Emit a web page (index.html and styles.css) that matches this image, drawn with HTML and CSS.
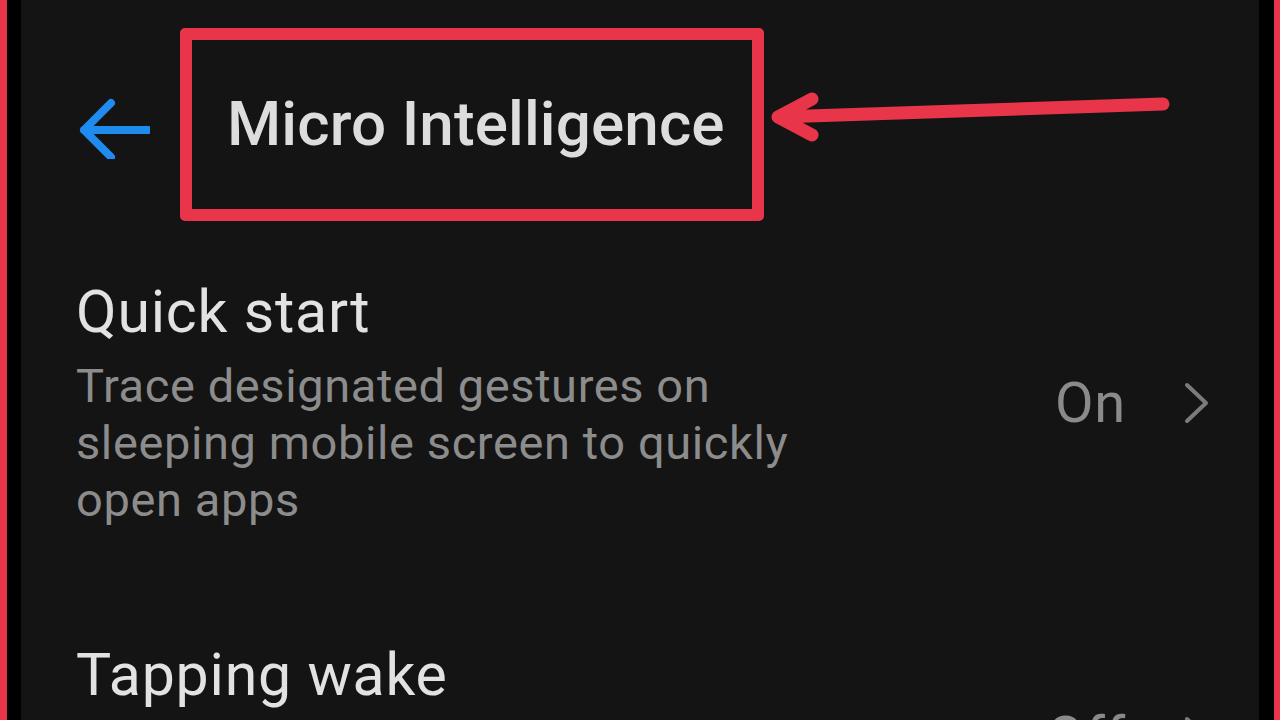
FILE: index.html
```html
<!DOCTYPE html>
<html lang="en">
<head>
<meta charset="utf-8">
<title>Micro Intelligence</title>
<link rel="stylesheet" href="styles.css">
</head>
<body>
<div class="frame">
  <div class="edge edge-left"></div>
  <main class="screen">
    <header class="appbar">
      <button class="back" aria-label="Back">
        <svg width="72" height="72" viewBox="0 0 72 72">
          <path d="M33 16 L6 43 L33 70 M6 43 L70 43" fill="none" stroke="#1f8bef" stroke-width="8" stroke-linecap="round" stroke-linejoin="round"/>
        </svg>
      </button>
      <div class="title-box">
        <h1 class="title">Micro Intelligence</h1>
      </div>
    </header>

    <section class="list">
      <div class="row">
        <div class="row-text">
          <div class="row-title">Quick start</div>
          <div class="row-sub">Trace designated gestures on sleeping mobile screen to quickly open apps</div>
        </div>
        <div class="row-value">
          <span class="value">On</span>
          <svg class="chev" width="26" height="42" viewBox="0 0 26 42">
            <path d="M3 3 L22 21 L3 39" fill="none" stroke="#7b7b7b" stroke-width="4" stroke-linecap="round" stroke-linejoin="round"/>
          </svg>
        </div>
      </div>
      <div class="row">
        <div class="row-text">
          <div class="row-title">Tapping wake</div>
          <div class="row-sub">Double-tap the screen to wake it up or turn it off</div>
        </div>
        <div class="row-value">
          <span class="value">Off</span>
          <svg class="chev" width="26" height="42" viewBox="0 0 26 42">
            <path d="M3 3 L22 21 L3 39" fill="none" stroke="#7b7b7b" stroke-width="4" stroke-linecap="round" stroke-linejoin="round"/>
          </svg>
        </div>
      </div>
    </section>
  </main>
  <div class="edge edge-right"></div>

  <svg class="pointer" width="1280" height="720" viewBox="0 0 1280 720" aria-hidden="true">
    <path d="M1163 104 L779 117 M812 99 L778 117 L812 135" fill="none" stroke="#e9354a" stroke-width="13" stroke-linecap="round" stroke-linejoin="round"/>
  </svg>
</div>
</body>
</html>
```

FILE: styles.css
```css
* {
  box-sizing: border-box;
}

html, body {
  margin: 0;
  padding: 0;
  height: 100%;
  overflow: hidden;
  background: #000;
}

body {
  font-family: Roboto, "Noto Sans", "Liberation Sans", sans-serif;
}

.frame {
  position: relative;
  display: flex;
  width: 1280px;
  height: 720px;
  overflow: hidden;
}

.edge {
  flex: none;
  background: #000;
}

.edge-left {
  width: 21px;
  border-left: 7px solid #e9354a;
}

.edge-right {
  width: 21px;
  border-right: 6px solid #e9354a;
}

.screen {
  flex: 1;
  background: #141414;
  display: flex;
  flex-direction: column;
}

.appbar {
  display: flex;
  align-items: center;
  padding-top: 28px;
  padding-left: 57px;
  height: 221px;
}

.back {
  flex: none;
  width: 72px;
  height: 72px;
  padding: 0;
  border: 0;
  background: none;
  margin-right: 30px;
  margin-top: -3px;
  display: block;
}

.back svg {
  display: block;
}

.title-box {
  width: 584px;
  height: 193px;
  border: 12px solid #e9354a;
  border-radius: 5px;
  padding: 47px 0 0 35px;
}

.title {
  margin: 0;
  font-size: 62px;
  line-height: 73px;
  font-weight: 500;
  color: #dddddd;
  letter-spacing: 0.1px;
}

.list {
  display: flex;
  flex-direction: column;
}

.row {
  display: flex;
  align-items: center;
  padding: 56px 49px 56px 55px;
}

.row-text {
  flex: 1;
  max-width: 800px;
  display: flex;
  flex-direction: column;
  gap: 10px;
}

.row-title {
  font-size: 59px;
  line-height: 70px;
  color: #e2e2e2;
  letter-spacing: 0.8px;
}

.row-sub {
  font-size: 47px;
  line-height: 57px;
  color: #8c8c8c;
  letter-spacing: 0.6px;
}

.row-value {
  margin-left: auto;
  display: flex;
  align-items: center;
  gap: 58px;
}

.value {
  font-size: 56px;
  line-height: 66px;
  color: #8a8a8a;
  letter-spacing: 0.8px;
}

.chev {
  display: block;
}

.pointer {
  position: absolute;
  left: 0;
  top: 0;
  pointer-events: none;
}
```
